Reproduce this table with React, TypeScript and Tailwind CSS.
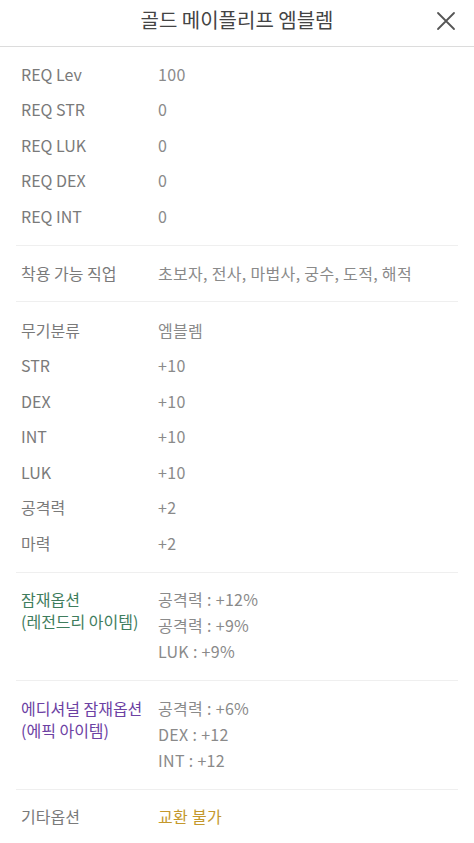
const font = { fontFamily: '"Noto Sans CJK KR", "Noto Sans", sans-serif' };

type Row = { label: string; value: string };

const req: Row[] = [
  { label: "REQ Lev", value: "100" },
  { label: "REQ STR", value: "0" },
  { label: "REQ LUK", value: "0" },
  { label: "REQ DEX", value: "0" },
  { label: "REQ INT", value: "0" },
];

const stats: Row[] = [
  { label: "무기분류", value: "엠블렘" },
  { label: "STR", value: "+10" },
  { label: "DEX", value: "+10" },
  { label: "INT", value: "+10" },
  { label: "LUK", value: "+10" },
  { label: "공격력", value: "+2" },
  { label: "마력", value: "+2" },
];

function SimpleRow({ label, value, valueClass = "text-[#8a8a8a]" }: Row & { valueClass?: string }) {
  return (
    <div className="flex h-[35.5px] items-center text-[16px]">
      <div className="w-[137px] shrink-0 text-[#7a7a7a]">{label}</div>
      <div className={`tracking-[0.02em] ${valueClass}`}>{value}</div>
    </div>
  );
}

function Section({ children, className = "", last = false }: { children: React.ReactNode; className?: string; last?: boolean }) {
  return (
    <div className={`mx-4 px-[5px] ${last ? "" : "border-b border-[#efefef]"} ${className}`}>
      {children}
    </div>
  );
}

function OptionBlock({ title, sub, color, lines }: { title: string; sub: string; color: string; lines: string[] }) {
  return (
    <div className="flex text-[16px] leading-[26px]">
      <div className={`w-[137px] shrink-0 leading-[22px] pt-[2px] ${color}`}>
        <div>{title}</div>
        <div>{sub}</div>
      </div>
      <div className="text-[#8a8a8a] tracking-[0.02em]">
        {lines.map((l, i) => (
          <div key={i}>{l}</div>
        ))}
      </div>
    </div>
  );
}

export default function App() {
  return (
    <div className="min-h-screen w-[474px] bg-white" style={font}>
      <div className="relative flex h-[47px] items-start justify-center border-b border-[#dcdcdc] pt-[6px]">
        <span className="text-[20px] leading-[28px] text-[#444]">골드 메이플리프 엠블렘</span>
        <button className="absolute right-[15px] top-[8px] p-0.5">
          <svg width="22" height="22" viewBox="0 0 22 22" fill="none" stroke="#555" strokeWidth="1.8" strokeLinecap="round">
            <path d="M3 3 L19 19 M19 3 L3 19" />
          </svg>
        </button>
      </div>

      <Section className="pt-[9px] pb-[11px]">
        {req.map((r) => (
          <SimpleRow key={r.label} {...r} />
        ))}
      </Section>

      <Section className="py-[10px]">
        <SimpleRow label="착용 가능 직업" value="초보자, 전사, 마법사, 궁수, 도적, 해적" />
      </Section>

      <Section className="pt-[10px] pb-[11px]">
        {stats.map((r) => (
          <SimpleRow key={r.label} {...r} />
        ))}
      </Section>

      <Section className="pt-[13px] pb-[16px]">
        <OptionBlock
          title="잠재옵션"
          sub="(레전드리 아이템)"
          color="text-[#3f7d5d]"
          lines={["공격력 : +12%", "공격력 : +9%", "LUK : +9%"]}
        />
      </Section>

      <Section className="pt-[14px] pb-[16px]">
        <OptionBlock
          title="에디셔널 잠재옵션"
          sub="(에픽 아이템)"
          color="text-[#6c41a3]"
          lines={["공격력 : +6%", "DEX : +12", "INT : +12"]}
        />
      </Section>

      <Section className="pt-[9px]" last>
        <SimpleRow label="기타옵션" value="교환 불가" valueClass="text-[#c4982c]" />
      </Section>
    </div>
  );
}
